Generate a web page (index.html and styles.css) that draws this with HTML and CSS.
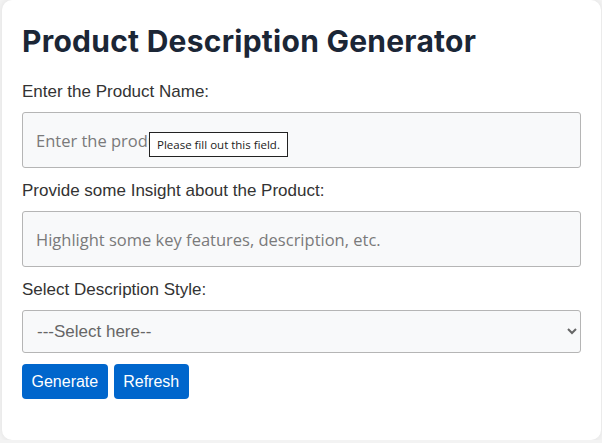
FILE: index.html
```html
<!DOCTYPE html>
<html lang="en">
<head>
    <meta charset="UTF-8">
    <meta name="viewport" content="width=device-width, initial-scale=1.0">
    <title>Product Description Generator</title>
    <link rel="stylesheet" href="styles.css">
</head>
<body>
    <div class="container">
        <h1>Product Description Generator</h1>

        <form class="gen-form">
            <label for="productName">Enter the Product Name:</label>
            <div class="field-wrap">
                <input type="text" id="productName" class="field" placeholder="Enter the product name" required>
                <div class="tooltip">Please fill out this field.</div>
            </div>

            <label for="insight">Provide some Insight about the Product:</label>
            <input type="text" id="insight" class="field" placeholder="Highlight some key features, description, etc.">

            <label for="style">Select Description Style:</label>
            <select id="style" class="field select-field">
                <option value="">---Select here--</option>
                <option value="formal">Formal</option>
                <option value="casual">Casual</option>
            </select>

            <div class="actions">
                <button type="button" class="btn">Generate</button>
                <button type="button" class="btn">Refresh</button>
            </div>
        </form>
    </div>
</body>
</html>
```

FILE: styles.css
```css
body {
    margin: 0;
    padding: 0 1px 0 2px;
    background: #f3f3f3;
    font-family: "Liberation Sans", Arial, sans-serif;
}

.container {
    background: white;
    border-radius: 10px;
    box-shadow: 0 0 6px rgba(0,0,0,0.08);
    padding: 20px 20px 40px;
    height: 440px;
    box-sizing: border-box;
}

h1 {
    font-family: Inter, "Open Sans", sans-serif;
    font-size: 30px;
    font-weight: 700;
    letter-spacing: 0.25px;
    color: #1b2636;
    margin: 3px 0 23px;
}

label {
    display: block;
    font-size: 17px;
    line-height: 19px;
    color: #333;
    margin-bottom: 11px;
}

.field-wrap {
    position: relative;
}

.field {
    display: block;
    width: 100%;
    box-sizing: border-box;
    height: 56px;
    padding: 0 13px;
    margin-bottom: 13px;
    background: #f8f9fa;
    border: 1px solid #b5b5b5;
    border-radius: 3px;
    font-family: "Open Sans", sans-serif;
    font-size: 16.5px;
    color: #333;
}

.field::placeholder {
    color: #7a7a7a;
}

.select-field {
    height: 43px;
    padding: 0 10px;
    margin-bottom: 11px;
    font-family: "Liberation Sans", Arial, sans-serif;
    font-size: 17px;
    color: #666;
}

.tooltip {
    position: absolute;
    left: 127px;
    top: 20px;
    background: white;
    border: 1px solid #222;
    padding: 4px 7px;
    font-family: "Open Sans", sans-serif;
    font-size: 11.5px;
    color: #222;
}

.actions {
    display: flex;
    gap: 6px;
}

.btn {
    background: #0066cc;
    color: white;
    border: none;
    border-radius: 4px;
    padding: 0 9.5px;
    height: 35px;
    font-family: "Liberation Sans", Arial, sans-serif;
    font-size: 16px;
    cursor: pointer;
}
```
